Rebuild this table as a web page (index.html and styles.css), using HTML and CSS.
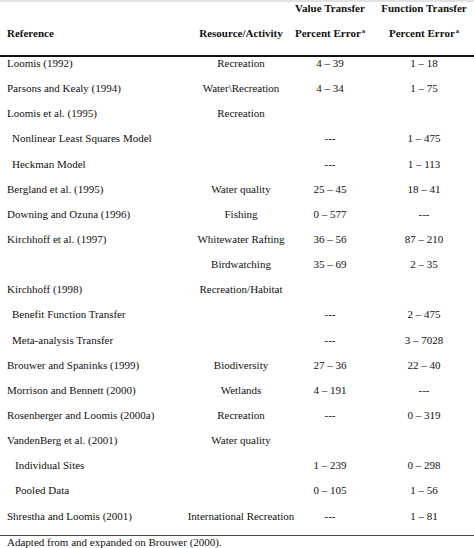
FILE: index.html
```html
<!DOCTYPE html>
<html>
<head>
<meta charset="utf-8">
<link rel="stylesheet" href="styles.css">
</head>
<body>
<div class="topbar"></div>
<div class="table">
  <div class="head">
    <div class="h1 c3 bold">Value Transfer</div>
    <div class="h1 c4 bold">Function Transfer</div>
    <div class="h2 c1 ref bold">Reference</div>
    <div class="h2 c2 bold">Resource/Activity</div>
    <div class="h2 c3 bold">Percent Error<sup class="note">a</sup></div>
    <div class="h2 c4 bold">Percent Error<sup class="note">a</sup></div>
  </div>
  <div class="rule-thick"></div>
  <div class="body">
    <div class="row"><div class="ref">Loomis (1992)</div><div class="mid">Recreation</div><div class="num">4 – 39</div><div class="num">1 – 18</div></div>
    <div class="row"><div class="ref">Parsons and Kealy (1994)</div><div class="mid">Water\Recreation</div><div class="num">4 – 34</div><div class="num">1 – 75</div></div>
    <div class="row"><div class="ref">Loomis et al. (1995)</div><div class="mid">Recreation</div><div class="num"></div><div class="num"></div></div>
    <div class="row"><div class="ref sub">Nonlinear Least Squares Model</div><div class="mid"></div><div class="num">---</div><div class="num">1 – 475</div></div>
    <div class="row"><div class="ref sub">Heckman Model</div><div class="mid"></div><div class="num">---</div><div class="num">1 – 113</div></div>
    <div class="row"><div class="ref">Bergland et al. (1995)</div><div class="mid">Water quality</div><div class="num">25 – 45</div><div class="num">18 – 41</div></div>
    <div class="row"><div class="ref">Downing and Ozuna (1996)</div><div class="mid">Fishing</div><div class="num">0 – 577</div><div class="num">---</div></div>
    <div class="row"><div class="ref">Kirchhoff et al. (1997)</div><div class="mid">Whitewater Rafting</div><div class="num">36 – 56</div><div class="num">87 – 210</div></div>
    <div class="row"><div class="ref"></div><div class="mid">Birdwatching</div><div class="num">35 – 69</div><div class="num">2 – 35</div></div>
    <div class="row"><div class="ref">Kirchhoff (1998)</div><div class="mid">Recreation/Habitat</div><div class="num"></div><div class="num"></div></div>
    <div class="row"><div class="ref sub">Benefit Function Transfer</div><div class="mid"></div><div class="num">---</div><div class="num">2 – 475</div></div>
    <div class="row"><div class="ref sub">Meta-analysis Transfer</div><div class="mid"></div><div class="num">---</div><div class="num">3 – 7028</div></div>
    <div class="row"><div class="ref">Brouwer and Spaninks (1999)</div><div class="mid">Biodiversity</div><div class="num">27 – 36</div><div class="num">22 – 40</div></div>
    <div class="row"><div class="ref">Morrison and Bennett (2000)</div><div class="mid">Wetlands</div><div class="num">4 – 191</div><div class="num">---</div></div>
    <div class="row"><div class="ref">Rosenberger and Loomis (2000a)</div><div class="mid">Recreation</div><div class="num">---</div><div class="num">0 – 319</div></div>
    <div class="row"><div class="ref">VandenBerg et al. (2001)</div><div class="mid">Water quality</div><div class="num"></div><div class="num"></div></div>
    <div class="row"><div class="ref sub2">Individual Sites</div><div class="mid"></div><div class="num">1 – 239</div><div class="num">0 – 298</div></div>
    <div class="row"><div class="ref sub2">Pooled Data</div><div class="mid"></div><div class="num">0 – 105</div><div class="num">1 – 56</div></div>
    <div class="row"><div class="ref">Shrestha and Loomis (2001)</div><div class="mid">International Recreation</div><div class="num">---</div><div class="num">1 – 81</div></div>
  </div>
  <div class="rule-thin"></div>
  <div class="foot">Adapted from and expanded on Brouwer (2000).</div>
</div>
</body>
</html>
```

FILE: styles.css
```css
html, body {
  margin: 0;
  padding: 0;
  background: #ffffff;
  overflow: hidden;
}
body {
  font-family: "Liberation Serif", "Times New Roman", serif;
  font-size: 11px;
  line-height: 12.65px;
  color: #111111;
}
.topbar {
  height: 2px;
  background: #e2e2e2;
}
.head {
  display: grid;
  grid-template-columns: 196px 90px 88px 100px;
  grid-template-rows: 25.2px 27.8px;
}
.head > div {
  white-space: nowrap;
  justify-self: center;
}
.head > .ref {
  justify-self: start;
}
.h1 { grid-row: 1; }
.h2 { grid-row: 2; }
.c1 { grid-column: 1; }
.c2 { grid-column: 2; }
.c3 { grid-column: 3; }
.c4 { grid-column: 4; }
.bold { font-weight: bold; }
.note {
  font-size: 6.5px;
  line-height: 0;
  vertical-align: 4px;
  margin-left: 1px;
}
.rule-thick {
  height: 2px;
  background: #111;
}
.row {
  display: grid;
  grid-template-columns: 196px 90px 88px 100px;
  height: 25.15px;
}
.row > div {
  white-space: nowrap;
}
.mid, .num {
  justify-self: center;
}
.ref {
  padding-left: 7px;
  justify-self: start;
}
.ref.sub {
  padding-left: 12px;
}
.ref.sub2 {
  padding-left: 15px;
}
.rule-thin {
  height: 1px;
  background: #4a4a4a;
}
.foot {
  padding-left: 7px;
  padding-top: 0;
  line-height: 12px;
}
```
